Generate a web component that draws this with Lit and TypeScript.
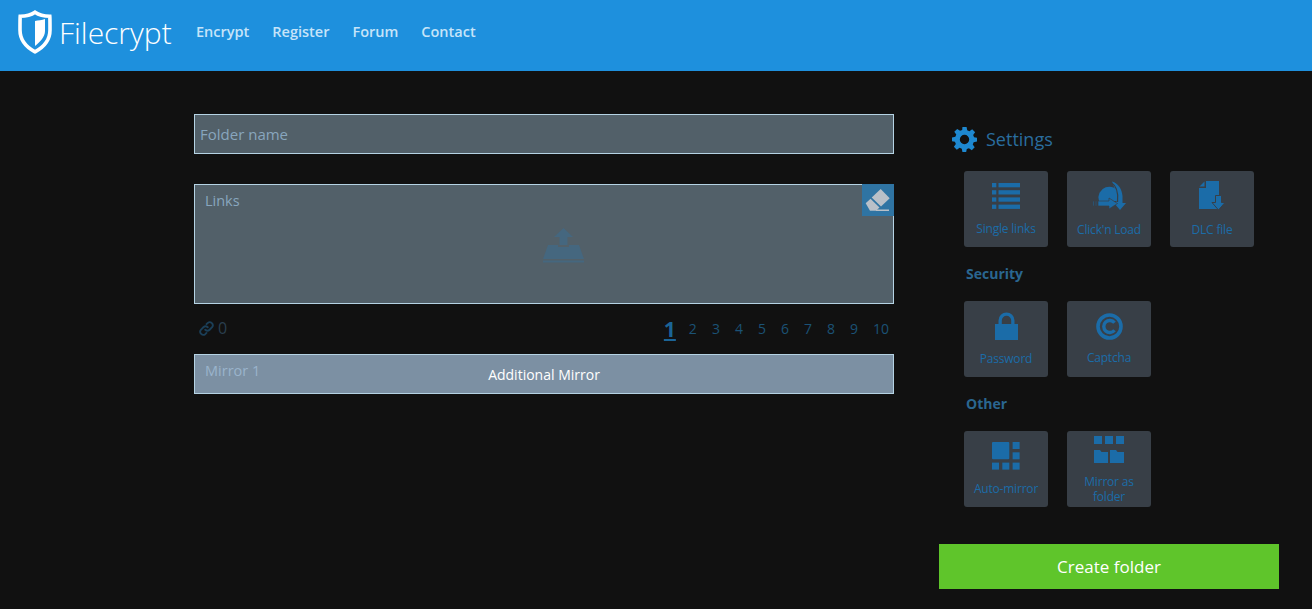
import { LitElement, html, css, svg } from "lit";
import { customElement } from "lit/decorators.js";

const icons: Record<string, unknown> = {
  list: svg`<svg width="28" height="26" viewBox="0 0 28 26" fill="#1b6ca8"><rect x="0" y="0" width="4.300" height="4.300"/><rect x="6.500" y="0" width="21.500" height="4.300"/><rect x="0" y="7.200" width="4.300" height="4.300"/><rect x="6.500" y="7.200" width="21.500" height="4.300"/><rect x="0" y="14.400" width="4.300" height="4.300"/><rect x="6.500" y="14.400" width="21.500" height="4.300"/><rect x="0" y="21.600" width="4.300" height="4.300"/><rect x="6.500" y="21.600" width="21.500" height="4.300"/></svg>`,
  cnl: svg`<svg width="33" height="29" viewBox="0 0 33 29"><path d="M6 20 A10.500 10.500 0 1 1 26.500 13 L26 20 Z" fill="#1b6ca8"/><path d="M19 .5 C25 2 29 8 29.500 15 L29.500 22 L33 22 L27 29 L21 22 L26 19 Z" fill="#1b6ca8"/><path d="M17.500 1 C24 5 25.500 13 24.500 21" stroke="#383f47" stroke-width="1.200" fill="none"/><path d="M0 20h1v5H0zM2.500 20h1v5h-1zM5 20h11v-3l8.500 5.500-8.500 5.500v-3H5z" fill="#1b6ca8" stroke="#383f47" stroke-width=".7"/></svg>`,
  dlc: svg`<svg width="26" height="29" viewBox="0 0 26 29" fill="#1b6ca8"><path d="M7 0H20V28H0V7H7Z"/><path d="M5.500 0.500V5.500H0.500Z"/><path d="M16.500 14.500H22.500V21.500H26L19.500 29 13 21.500H16.500Z" stroke="#383f47" stroke-width="1"/></svg>`,
  lock: svg`<svg width="23" height="28" viewBox="0 0 23 28" fill="#1b6ca8"><path fill-rule="evenodd" d="M3.500 12V8.500a8 8 0 0 1 16 0V12H23V28H0V12ZM6.800 12h9.400V8.500a4.700 4.700 0 0 0-9.400 0Z"/></svg>`,
  captcha: svg`<svg width="27" height="27" viewBox="0 0 27 27"><circle cx="13.500" cy="13.500" r="11.500" fill="none" stroke="#1b6ca8" stroke-width="3.600"/><path d="M18.500 9.800A6 6 0 1 0 18.500 17.200" fill="none" stroke="#1b6ca8" stroke-width="3.400"/></svg>`,
  auto: svg`<svg width="28" height="28" viewBox="0 0 28 28" fill="#1b6ca8"><rect x="0" y="0" width="17.300" height="17.300" rx="1"/><rect x="20.600" y="0" width="7" height="7"/><rect x="20.600" y="10.300" width="7" height="7"/><rect x="0" y="20.600" width="7" height="7"/><rect x="10.300" y="20.600" width="7" height="7"/><rect x="20.600" y="20.600" width="7" height="7"/></svg>`,
  mfolder: svg`<svg width="30" height="27" viewBox="0 0 30 27" fill="#1b6ca8"><rect x="0" y="0" width="8" height="8"/><rect x="11" y="0" width="8" height="8"/><rect x="22" y="0" width="8" height="8"/><path d="M0 14h6l1.500 2H14v11H0Z"/><path d="M16 14h6l1.500 2H30v11H16Z"/></svg>`,
};

@customElement("app-root")
export class AppRoot extends LitElement {
  static styles = css`
    :host {
      display: block;
      height: 609px;
      background: #111111;
      font-family: "Open Sans", "Liberation Sans", sans-serif;
      overflow: hidden;
    }
    .header {
      height: 71px;
      background: #1e90dd;
      display: flex;
      align-items: flex-start;
      padding-left: 18px;
      box-sizing: border-box;
    }
    .logo {
      display: flex;
      align-items: center;
      height: 65px;
      width: 178px;
      gap: 7px;
      color: #fff;
      font-size: 30px;
      font-weight: 300;
    }
    .logo svg { margin-top: -1px; }
    .nav { display: flex; gap: 23px; padding-top: 21.500px; }
    .nav span {
      color: #c6e4f9;
      font-size: 14.500px;
      font-weight: 600;
      line-height: 20px;
    }
    .main { display: flex; align-items: flex-start; padding-left: 194px; }
    .left { width: 700px; padding-top: 43px; margin-right: 45px; }
    .field {
      box-sizing: border-box;
      border: 1px solid #b5d3e4;
      background: #526069;
      position: relative;
    }
    .folder {
      height: 40px;
      padding-left: 5px;
      display: flex;
      align-items: center;
      color: #88a6be;
      font-size: 15px;
      margin-bottom: 30px;
    }
    .links {
      height: 120px;
      padding: 6px 10px;
      color: #88a6be;
      font-size: 14.500px;
      line-height: 20px;
    }
    .erase {
      position: absolute;
      top: -1px;
      right: -1px;
      width: 32px;
      height: 32px;
      background: #2f74a3;
      display: flex;
      align-items: center;
      justify-content: center;
    }
    .upload { position: absolute; left: 348px; top: 43px; }
    .stats {
      height: 50px;
      display: flex;
      justify-content: space-between;
      align-items: flex-start;
      box-sizing: border-box;
      padding: 14px 5px 0 5px;
    }
    .count {
      display: flex;
      align-items: center;
      gap: 4px;
      color: #2a3f4e;
      font-size: 16px;
      line-height: 20px;
    }
    .pages { display: flex; align-items: center; gap: 15px; height: 20px; margin-top: 1px; }
    .pages span { color: #1b5275; font-size: 14px; line-height: 20px; }
    .pages .on {
      color: #1b6496;
      font-size: 21px;
      font-weight: 700;
      text-decoration: underline;
      margin-right: -2px;
    }
    .mirror {
      height: 40px;
      background: #7c90a3;
      display: flex;
      align-items: center;
      justify-content: center;
      color: #fff;
      font-size: 14px;
    }
    .mirror .ph {
      position: absolute;
      left: 10px;
      top: 6px;
      color: #9ab4cc;
      font-size: 14.500px;
      line-height: 20px;
    }
    .mirror .add { padding-top: 1px; }
    .right { width: 340px; }
    .title {
      margin: 55px 0 0 13px;
      height: 26px;
      display: flex;
      align-items: center;
      gap: 9px;
      color: #2a6d9e;
      font-size: 18px;
      line-height: 26px;
    }
    .tiles { display: flex; gap: 19px; padding-left: 25px; }
    .s1 { margin-top: 19px; }
    .tile {
      width: 84px;
      height: 76px;
      box-sizing: border-box;
      background: #383f47;
      border-radius: 3px;
      color: #1b6ca8;
      font-size: 12px;
      letter-spacing: -0.2px;
      text-align: center;
      display: flex;
      flex-direction: column;
      align-items: center;
    }
    .ico { height: 39px; width: 100%; display: flex; align-items: flex-end; justify-content: center; }
    .lab { margin-top: 11px; line-height: 15px; }
    .tile.cap .lab { margin-top: 10px; }
    .tile.two .ico { height: 32px; }
    .tile.two .lab { margin-top: 11px; }
    .tile.t1 .ico { height: 38px; }
    .tile.t1 .lab { margin-top: 12px; }
    .tile.t2 .lab { margin-top: 12px; }
    .head {
      color: #2a6690;
      font-size: 14px;
      font-weight: 700;
      line-height: 20px;
      padding-left: 27px;
      margin: 17px 0 17px;
    }
    .create {
      margin-top: 37px;
      height: 45px;
      background: #5fc52b;
      color: #fff;
      font-size: 17px;
      font-weight: 500;
      display: flex;
      align-items: center;
      justify-content: center;
    }
  `;

  tile(icon: string, label: unknown, cls = "") {
    return html`<div class="tile ${cls}"><div class="ico">${icons[icon]}</div><div class="lab">${label}</div></div>`;
  }

  render() {
    return html`
      <div class="header">
        <div class="logo">
          <svg width="34" height="44" viewBox="0 0 34 44">
            <path d="M17 2.200 C21 5 26 6.200 31.800 6.200 C32 8 32 14 32 20 C32 30 26 37 17 41.800 C8 37 2 30 2 20 C2 14 2 8 2.200 6.200 C8 6.200 13 5 17 2.200 Z" fill="none" stroke="#fff" stroke-width="3.600"/>
            <path d="M17 11 C20 10.500 24 10 27 9 L27 21 C27 27 22 32 17 36 Z" fill="#fff"/>
          </svg>
          <span>Filecrypt</span>
        </div>
        <div class="nav"><span>Encrypt</span><span>Register</span><span>Forum</span><span>Contact</span></div>
      </div>
      <div class="main">
        <div class="left">
          <div class="field folder">Folder name</div>
          <div class="field links">
            Links
            <div class="erase">
              <svg width="26" height="24" viewBox="0 0 26 24" fill="#b9c0c8">
                <path d="M15.700 1 24.700 10.300 16 18.500 6.700 9.500Z"/>
                <path d="M5.500 10.800 14.500 19.500 11 22.800H5L.7 15.300Z"/>
                <rect x="11" y="21.500" width="13" height="1.500"/>
              </svg>
            </div>
            <div class="upload">
              <svg width="41" height="35" viewBox="0 0 41 35" fill="#45677f">
                <path d="M20.500 0 30 9H24.500V17H16.500V9H11Z"/>
                <path d="M5 17H15V19H26V17H36L41 31H0Z"/>
                <rect x="0" y="32.500" width="41" height="2"/>
              </svg>
            </div>
          </div>
          <div class="stats">
            <div class="count">
              <svg width="15" height="15" viewBox="0 0 24 24" fill="none" stroke="#1b3f58" stroke-width="3" stroke-linecap="round"><path d="M10 14a5 5 0 0 0 7 0l4-4a5 5 0 0 0-7-7l-2 2"/><path d="M14 10a5 5 0 0 0-7 0l-4 4a5 5 0 0 0 7 7l2-2"/></svg>
              <span>0</span>
            </div>
            <div class="pages">
              <span class="on">1</span><span>2</span><span>3</span><span>4</span><span>5</span><span>6</span><span>7</span><span>8</span><span>9</span><span>10</span>
            </div>
          </div>
          <div class="field mirror"><span class="ph">Mirror 1</span><span class="add">Additional Mirror</span></div>
        </div>
        <div class="right">
          <div class="title">
            <svg width="25" height="25" viewBox="0 0 24 24" fill="#1e88d0"><path fill-rule="evenodd" d="M10 0h4l.6 3.200 2.100.9L19.400 2.200l2.800 2.800-1.900 2.700.9 2.100L24 10.400v3.600l-3.200.6-.9 2.100 1.900 2.700-2.800 2.800-2.700-1.900-2.100.9L13.600 24h-3.600l-.6-3.200-2.100-.9-2.700 1.900-2.800-2.800 1.900-2.700-.9-2.100L0 13.600V10l3.200-.6.9-2.100L2.200 4.600 5 1.800l2.700 1.900 2.100-.9ZM12 7.500a4.500 4.500 0 1 0 0 9 4.500 4.500 0 0 0 0-9Z"/></svg>
            <span>Settings</span>
          </div>
          <div class="tiles s1">
            ${this.tile("list", "Single links", "t1")}
            ${this.tile("cnl", "Click'n Load", "t2")}
            ${this.tile("dlc", "DLC file", "t2")}
          </div>
          <div class="head">Security</div>
          <div class="tiles">
            ${this.tile("lock", "Password")}
            ${this.tile("captcha", "Captcha", "cap")}
          </div>
          <div class="head">Other</div>
          <div class="tiles">
            ${this.tile("auto", "Auto-mirror")}
            ${this.tile("mfolder", html`Mirror as<br />folder`, "two")}
          </div>
          <div class="create">Create folder</div>
        </div>
      </div>
    `;
  }
}
